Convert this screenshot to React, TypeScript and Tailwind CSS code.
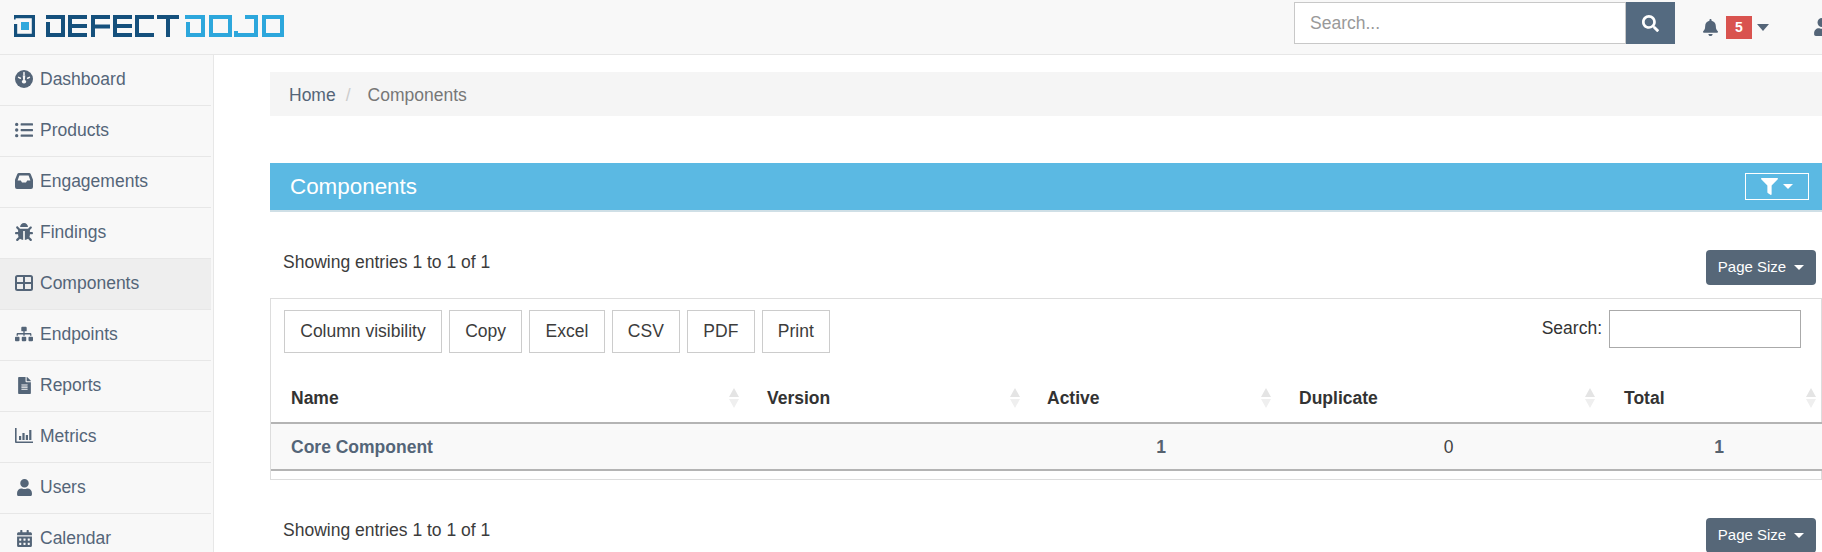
import React from "react";
import { FaListUl, FaBug, FaSitemap, FaFileAlt, FaUser, FaCalendarAlt, FaBell, FaSearch, FaFilter } from "react-icons/fa";

const GaugeIcon = () => (
  <svg viewBox="0 0 18 18" className="w-[18px] h-[18px]">
    <circle cx="9" cy="9" r="9" fill="currentColor" />
    <path d="M9 2.5v2.6M3.6 7.4l1.8.8M14.4 7.4l-1.8.8" stroke="#f8f8f8" strokeWidth="1.5" strokeLinecap="round" />
    <path d="M7.7 5.6h2.6L9.8 10a2 2 0 1 1-1.6 0z" fill="#f8f8f8" />
    <path d="M3 14.2h12" stroke="currentColor" strokeWidth="1.5" />
  </svg>
);
const InboxIcon = () => (
  <svg viewBox="0 0 18 16" className="w-[18px] h-[16px]">
    <path d="M4 0h10a2 2 0 0 1 1.8 1.2l2 5a2 2 0 0 1 .2.8v7a2 2 0 0 1-2 2H2a2 2 0 0 1-2-2V7a2 2 0 0 1 .2-.8l2-5A2 2 0 0 1 4 0z" fill="currentColor" />
    <path d="M4.4 2.4h9.2l1.8 5h-3.2l-1.2 2H7l-1.2-2H2.600z" fill="#f8f8f8" />
  </svg>
);
const TableIcon = () => (
  <svg viewBox="0 0 18 16" className="w-[18px] h-[16px]" fill="none" stroke="currentColor" strokeWidth="2">
    <rect x="1" y="1" width="16" height="14" rx="1.5" />
    <path d="M9 1v14M1 8h16" />
  </svg>
);
const BarsIcon = () => (
  <svg viewBox="0 0 18 16" className="w-[18px] h-[16px]" fill="currentColor">
    <path d="M0 0h1.6v13.6H18V15H1a1 1 0 0 1-1-1z" />
    <rect x="4" y="8" width="2.2" height="4" />
    <rect x="7.4" y="5" width="2.2" height="7" />
    <rect x="10.8" y="7" width="2.2" height="5" />
    <rect x="14.2" y="2" width="2.2" height="10" />
  </svg>
);

const nav: [string, React.ReactNode, boolean?][] = [
  ["Dashboard", <GaugeIcon />],
  ["Products", <FaListUl size={18} />],
  ["Engagements", <InboxIcon />],
  ["Findings", <FaBug size={18} />],
  ["Components", <TableIcon />, true],
  ["Endpoints", <FaSitemap size={20} />],
  ["Reports", <FaFileAlt size={17} />],
  ["Metrics", <BarsIcon />],
  ["Users", <FaUser size={17} />],
  ["Calendar", <FaCalendarAlt size={17} />],
];

const Logo = () => (
  <svg width="272" height="26" viewBox="0 0 272 26" fill="none" strokeWidth="4" aria-label="DefectDojo logo">
    <g stroke="#15507c">
      <path d="M0 4.500V1.600H19.400V20.400H1.600V9" strokeWidth="3.200" />
      <rect x="7" y="7" width="8" height="8" fill="#2fa8dc" stroke="none" />
      <path d="M32 2H49V20H34V7" />
      <path d="M73 2H56V20H73M56 11H73" />
      <path d="M96 2H79V22M79 11.500H96" />
      <path d="M118 2H101V20H118M101 11H118" />
      <path d="M140 2H123V20H140" />
      <path d="M143 2H165M154 2V22" />
    </g>
    <g stroke="#2da7dc">
      <path d="M171 2H189V20H174V7" />
      <rect x="197" y="2" width="19" height="18" />
      <path d="M222 16V20H242V2H231" />
      <rect x="250" y="2" width="18" height="18" />
    </g>
  </svg>
);

const Caret = ({ className = "" }: { className?: string }) => (
  <span className={`inline-block w-0 h-0 border-x-[5px] border-x-transparent border-t-[5px] border-t-current ${className}`} />
);

const Sort = () => (
  <span className="flex flex-col gap-[2px]">
    <span className="w-0 h-0 border-x-[5px] border-x-transparent border-b-[9px] border-b-[#e4e4e4]" />
    <span className="w-0 h-0 border-x-[5px] border-x-transparent border-t-[9px] border-t-[#efefef]" />
  </span>
);

const Toolbar = () => (
  <div className="flex items-center justify-between h-[35px] pl-[13px] pr-[6px]">
    <span className="text-[17.5px] text-[#3c3c3c] pb-[10px]">Showing entries 1 to 1 of 1</span>
    <button className="flex items-center gap-[8px] h-[35px] w-[110px] justify-center rounded-[4px] bg-[#566778] text-white text-[15px]">
      Page Size <Caret />
    </button>
  </div>
);

const cols: [string, number, string][] = [
  ["Name", 476, "pr-[8px]"],
  ["Version", 280, "pr-[7px]"],
  ["Active", 252, "pr-[8px]"],
  ["Duplicate", 325, "pr-[9px]"],
  ["Total", 218, "pr-[6px]"],
];

export default function App() {
  return (
    <div className="w-[1822px] h-[552px] overflow-hidden flex flex-col bg-white font-['Liberation_Sans',Arial,sans-serif] text-[#333]">
      <header className="h-[55px] shrink-0 flex items-center bg-[#f8f8f8] border-b border-[#e7e7e7] pl-[14px] overflow-hidden">
        <div className="pt-[1px]"><Logo /></div>
        <div className="ml-[1008px] flex h-[42px] self-start mt-[2px] w-[381px] shrink-0">
          <div className="flex-1 border border-[#c8c8c8] bg-white flex items-center pl-[15px] text-[17.5px] text-[#999]">Search...</div>
          <div className="w-[49px] bg-[#546a80] flex items-center justify-center text-white"><FaSearch size={17} /></div>
        </div>
        <div className="flex items-center text-[#546578] ml-[27px] shrink-0">
          <FaBell size={17} />
          <span className="ml-[7px] w-[26px] h-[23px] bg-[#d9534f] text-white font-bold text-[14px] flex items-center justify-center">5</span>
          <Caret className="ml-[5px] border-x-[6px] border-t-[7px]" />
          <span className="ml-[44px] w-[18px]"><FaUser size={18} /></span>
        </div>
      </header>
      <div className="flex flex-1 min-h-0">
        <aside className="w-[214px] shrink-0 bg-[#f8f8f8] border-r border-[#e7e7e7] overflow-hidden">
          {nav.map(([label, icon, active]) => (
            <div key={label} className={`h-[51px] mr-[2px] flex items-center border-b border-[#e7e7e7] text-[17.5px] text-[#546578] pb-[2px] ${active ? "bg-[#eeeeee]" : ""}`}>
              <span className="w-[40px] pl-[15px] pr-[7px] flex justify-center shrink-0">{icon}</span>
              {label}
            </div>
          ))}
        </aside>
        <main className="flex-1 min-w-0 pl-[56px] pt-[17px]">
          <nav className="h-[44px] bg-[#f5f5f5] flex items-center pl-[19px] pt-[2px] text-[17.5px]">
            <span className="text-[#546578]">Home</span>
            <span className="text-[#ccc] ml-[10px] mr-[17px]">/</span>
            <span className="text-[#777]">Components</span>
          </nav>
          <div className="mt-[47px] h-[49px] bg-[#5bb9e3] flex items-center justify-between pl-[20px] pr-[13px] border-b-2 border-[#cfdfe6]">
            <h1 className="text-[22.4px] text-white">Components</h1>
            <button className="w-[64px] h-[27px] border border-white flex items-center justify-center gap-[5px] text-white">
              <FaFilter size={17} /><Caret />
            </button>
          </div>
          <div className="mt-[38px]"><Toolbar /></div>
          <section className="mt-[13px] border border-[#ddd] h-[182px]">
            <div className="flex items-start justify-between pt-[11px] pl-[13px] pr-[20px]">
              <div className="flex gap-[7px]">
                {["Column visibility", "Copy", "Excel", "CSV", "PDF", "Print"].map((b) => (
                  <button key={b} className="h-[43px] px-[15.25px] border border-[#ccc] text-[17.5px] text-[#3c3c3c]">{b}</button>
                ))}
              </div>
              <label className="flex items-center gap-[7px] text-[17.5px] text-[#333]">
                <span className="pb-[2px]">Search:</span>
                <span className="w-[192px] h-[38px] border border-[#aaa] bg-white" />
              </label>
            </div>
            <table className="w-full table-fixed border-collapse mt-[13px]">
              <colgroup>{cols.map(([n, w]) => <col key={n} style={{ width: w }} />)}</colgroup>
              <thead>
                <tr className="h-[57px] border-b-2 border-[#b4b4b4]">
                  {cols.map(([n, , pr]) => (
                    <th key={n} className={`pl-[20px] pt-[8px] ${pr}`}>
                      <span className="flex items-center justify-between text-[17.5px] font-bold text-[#333]">{n}<Sort /></span>
                    </th>
                  ))}
                </tr>
              </thead>
              <tbody>
                <tr className="h-[47px] bg-[#f9f9f9] border-b-2 border-[#b4b4b4] text-[17.5px]">
                  <td className="pl-[20px] pt-[1px] font-bold text-[#546578]">Core Component</td>
                  <td />
                  <td className="text-center pl-[16px] pt-[1px] font-bold text-[#56626f]">1</td>
                  <td className="text-center pl-[14px] pt-[1px] text-[#444]">0</td>
                  <td className="text-center pl-[12px] pt-[1px] font-bold text-[#56626f]">1</td>
                </tr>
              </tbody>
            </table>
          </section>
          <div className="mt-[38px]"><Toolbar /></div>
        </main>
      </div>
    </div>
  );
}
